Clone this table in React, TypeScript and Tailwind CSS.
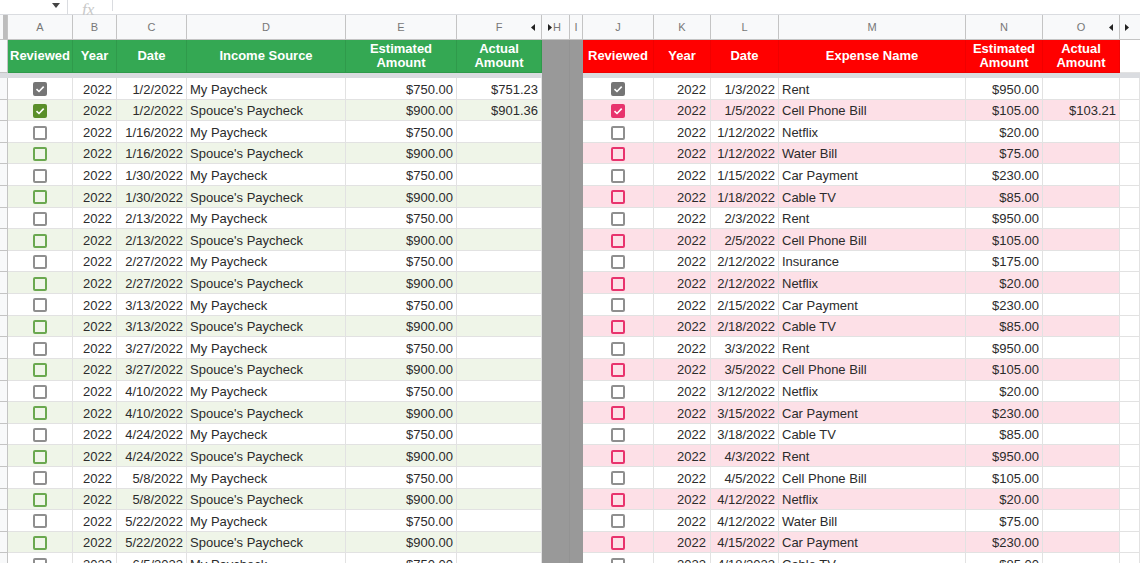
import React from "react";

const GRID =
  "grid grid-cols-[8px_65px_44px_70px_159px_111px_85px_28px_13px_71px_57px_68px_187px_77px_77px_20px]";

type Income = { date: string; source: string; est: string; actual?: string; checked?: boolean };
type Expense = { date: string; name: string; est: string; actual?: string; checked?: boolean };

const income: Income[] = [
  { date: "1/2/2022", source: "My Paycheck", est: "$750.00", actual: "$751.23", checked: true },
  { date: "1/2/2022", source: "Spouce's Paycheck", est: "$900.00", actual: "$901.36", checked: true },
  ...["1/16", "1/30", "2/13", "2/27", "3/13", "3/27", "4/10", "4/24", "5/8", "5/22"].flatMap((d) => [
    { date: `${d}/2022`, source: "My Paycheck", est: "$750.00" },
    { date: `${d}/2022`, source: "Spouce's Paycheck", est: "$900.00" },
  ]),
  { date: "6/5/2022", source: "My Paycheck", est: "$750.00" },
];

const expenses: Expense[] = [
  { date: "1/3/2022", name: "Rent", est: "$950.00", checked: true },
  { date: "1/5/2022", name: "Cell Phone Bill", est: "$105.00", actual: "$103.21", checked: true },
  { date: "1/12/2022", name: "Netflix", est: "$20.00" },
  { date: "1/12/2022", name: "Water Bill", est: "$75.00" },
  { date: "1/15/2022", name: "Car Payment", est: "$230.00" },
  { date: "1/18/2022", name: "Cable TV", est: "$85.00" },
  { date: "2/3/2022", name: "Rent", est: "$950.00" },
  { date: "2/5/2022", name: "Cell Phone Bill", est: "$105.00" },
  { date: "2/12/2022", name: "Insurance", est: "$175.00" },
  { date: "2/12/2022", name: "Netflix", est: "$20.00" },
  { date: "2/15/2022", name: "Car Payment", est: "$230.00" },
  { date: "2/18/2022", name: "Cable TV", est: "$85.00" },
  { date: "3/3/2022", name: "Rent", est: "$950.00" },
  { date: "3/5/2022", name: "Cell Phone Bill", est: "$105.00" },
  { date: "3/12/2022", name: "Netflix", est: "$20.00" },
  { date: "3/15/2022", name: "Car Payment", est: "$230.00" },
  { date: "3/18/2022", name: "Cable TV", est: "$85.00" },
  { date: "4/3/2022", name: "Rent", est: "$950.00" },
  { date: "4/5/2022", name: "Cell Phone Bill", est: "$105.00" },
  { date: "4/12/2022", name: "Netflix", est: "$20.00" },
  { date: "4/12/2022", name: "Water Bill", est: "$75.00" },
  { date: "4/15/2022", name: "Car Payment", est: "$230.00" },
  { date: "4/18/2022", name: "Cable TV", est: "$85.00" },
];

type Kind = "gray" | "green" | "pink" | "none-gray" | "none-green" | "none-pink";

function Check({ kind }: { kind: Kind }) {
  const styles: Record<Kind, string> = {
    gray: "bg-[#757575] border-[#757575]",
    green: "bg-[#5a8f29] border-[#5a8f29]",
    pink: "bg-[#e8336d] border-[#e8336d]",
    "none-gray": "bg-white border-[#8f8f8f]",
    "none-green": "bg-transparent border-[#6aa84f]",
    "none-pink": "bg-transparent border-[#e8336d]",
  };
  const filled = kind === "gray" || kind === "green" || kind === "pink";
  return (
    <div className={`w-[14px] h-[14px] rounded-[2px] border-2 flex items-center justify-center ${styles[kind]}`}>
      {filled && (
        <svg width="10" height="10" viewBox="0 0 10 10">
          <path d="M1.5 5.2 L4 7.5 L8.7 2.6" stroke="white" strokeWidth="1.6" fill="none" />
        </svg>
      )}
    </div>
  );
}

function Cell({ className = "", children }: { className?: string; children?: React.ReactNode }) {
  return (
    <div
      className={`border-r border-b border-[#e2e2e2] flex items-center pt-[2px] overflow-hidden whitespace-nowrap ${className}`}
    >
      {children}
    </div>
  );
}

function Tri({ dir }: { dir: "l" | "r" }) {
  return (
    <svg width="4" height="7" viewBox="0 0 4 7">
      <path d={dir === "l" ? "M4 0 L0 3.5 L4 7 Z" : "M0 0 L4 3.5 L0 7 Z"} fill="#222" />
    </svg>
  );
}

function ColLetter({ label, extra }: { label?: string; extra?: React.ReactNode }) {
  return (
    <div className="relative border-r border-b border-[#c4c4c4] bg-[#f8f9fa] flex items-center justify-center text-[11px] text-[#777]">
      {label}
      {extra}
    </div>
  );
}

function HeadCell({ children, color }: { children?: React.ReactNode; color: string }) {
  return (
    <div
      className={`border-r border-b flex items-center justify-center text-center text-[13px] leading-[14px] font-bold text-white ${color}`}
    >
      {children}
    </div>
  );
}

export default function App() {
  const rows = Array.from({ length: 23 });
  return (
    <div className="w-[1140px] h-[563px] overflow-hidden bg-white font-['Liberation_Sans',Arial,sans-serif] text-[13px] text-[#2b2b2b]">
      {/* formula bar */}
      <div className="h-[15px] border-b border-[#dadce0] flex items-center">
        <div className="w-[68px] h-full border-r border-[#dadce0] flex items-start justify-end pr-[7px] pt-[3px]">
          <svg width="8" height="5" viewBox="0 0 8 5">
            <path d="M0 0 L8 0 L4 5 Z" fill="#444" />
          </svg>
        </div>
        <div className="w-[45px] h-full border-r border-[#dadce0] flex items-start pl-[14px] -mt-[6px] text-[17px] italic text-[#c8c8c8] font-['Liberation_Serif',serif]">
          fx
        </div>
      </div>

      {/* column letters */}
      <div className={`${GRID} h-[25px]`}>
        <div className="border-r border-b border-[#c4c4c4] bg-[#f8f9fa] flex justify-end">
          <div className="w-[4px] h-full bg-[#bdbdbd]" />
        </div>
        {["A", "B", "C", "D", "E"].map((l) => (
          <ColLetter key={l} label={l} />
        ))}
        <ColLetter
          label="F"
          extra={
            <span className="absolute right-[6px] top-[9px] flex">
              <Tri dir="l" />
            </span>
          }
        />
        <div className="border-r border-b border-[#c4c4c4] bg-[#f8f9fa] flex items-center pl-[6px] gap-[1px] text-[11px] text-[#777]">
          <Tri dir="r" />
          <span>H</span>
        </div>
        <ColLetter label="I" />
        {["J", "K", "L", "M", "N"].map((l) => (
          <ColLetter key={l} label={l} />
        ))}
        <ColLetter
          label="O"
          extra={
            <span className="absolute right-[6px] top-[9px] flex">
              <Tri dir="l" />
            </span>
          }
        />
        <div className="border-b border-[#c4c4c4] bg-[#f8f9fa] flex items-center pl-[5px]">
          <Tri dir="r" />
        </div>
      </div>

      {/* header row */}
      <div className={`${GRID} h-[33px]`}>
        <div className="border-r border-b border-[#c4c4c4] bg-[#f8f9fa]" />
        <HeadCell color="bg-[#34a853] border-[#2f9a4b]">Reviewed</HeadCell>
        <HeadCell color="bg-[#34a853] border-[#2f9a4b]">Year</HeadCell>
        <HeadCell color="bg-[#34a853] border-[#2f9a4b]">Date</HeadCell>
        <HeadCell color="bg-[#34a853] border-[#2f9a4b]">Income Source</HeadCell>
        <HeadCell color="bg-[#34a853] border-[#2f9a4b]">
          Estimated
          <br />
          Amount
        </HeadCell>
        <HeadCell color="bg-[#34a853] border-[#2f9a4b]">
          Actual
          <br />
          Amount
        </HeadCell>
        <div className="bg-[#999999] border-r border-[#939393]" />
        <div className="bg-[#999999]" />
        <HeadCell color="bg-[#ff0000] border-[#f00000]">Reviewed</HeadCell>
        <HeadCell color="bg-[#ff0000] border-[#f00000]">Year</HeadCell>
        <HeadCell color="bg-[#ff0000] border-[#f00000]">Date</HeadCell>
        <HeadCell color="bg-[#ff0000] border-[#f00000]">Expense Name</HeadCell>
        <HeadCell color="bg-[#ff0000] border-[#f00000]">
          Estimated
          <br />
          Amount
        </HeadCell>
        <HeadCell color="bg-[#ff0000] border-[#f00000]">
          Actual
          <br />
          Amount
        </HeadCell>
        <div className="border-b border-[#e2e2e2]" />
      </div>

      {/* frozen divider */}
      <div className={`${GRID} h-[5px]`}>
        <div className="col-span-7 bg-[#dadce0]" />
        <div className="bg-[#999999] border-r border-[#939393]" />
        <div className="bg-[#999999]" />
        <div className="col-span-7 bg-[#dadce0]" />
      </div>

      {/* data rows */}
      {rows.map((_, i) => {
        const inc = income[i];
        const exp = expenses[i];
        const alt = i % 2 === 1;
        const gBg = alt ? "bg-[#eff5e8]" : "bg-white";
        const pBg = alt ? "bg-[#fde0e7]" : "bg-white";
        const incKind: Kind = inc.checked ? (alt ? "green" : "gray") : alt ? "none-green" : "none-gray";
        const expKind: Kind = exp.checked ? (alt ? "pink" : "gray") : alt ? "none-pink" : "none-gray";
        return (
          <div key={i} className={`${GRID} h-[21.62px]`}>
            <div className="border-r border-b border-[#c4c4c4] bg-[#f8f9fa]" />
            <Cell className={`${gBg} justify-center`}>
              <Check kind={incKind} />
            </Cell>
            <Cell className={`${gBg} justify-end pr-[4px]`}>2022</Cell>
            <Cell className={`${gBg} justify-end pr-[3px]`}>{inc.date}</Cell>
            <Cell className={`${gBg} pl-[3px]`}>{inc.source}</Cell>
            <Cell className={`${gBg} justify-end pr-[3px]`}>{inc.est}</Cell>
            <Cell className={`${gBg} justify-end pr-[3px]`}>{inc.actual}</Cell>
            <div className="bg-[#999999] border-r border-[#939393]" />
            <div className="bg-[#999999]" />
            <Cell className={`${pBg} justify-center`}>
              <Check kind={expKind} />
            </Cell>
            <Cell className={`${pBg} justify-end pr-[4px]`}>2022</Cell>
            <Cell className={`${pBg} justify-end pr-[3px]`}>{exp.date}</Cell>
            <Cell className={`${pBg} pl-[3px]`}>{exp.name}</Cell>
            <Cell className={`${pBg} justify-end pr-[3px]`}>{exp.est}</Cell>
            <Cell className={`${pBg} justify-end pr-[3px]`}>{exp.actual}</Cell>
            <Cell className="bg-white" />
          </div>
        );
      })}
    </div>
  );
}
